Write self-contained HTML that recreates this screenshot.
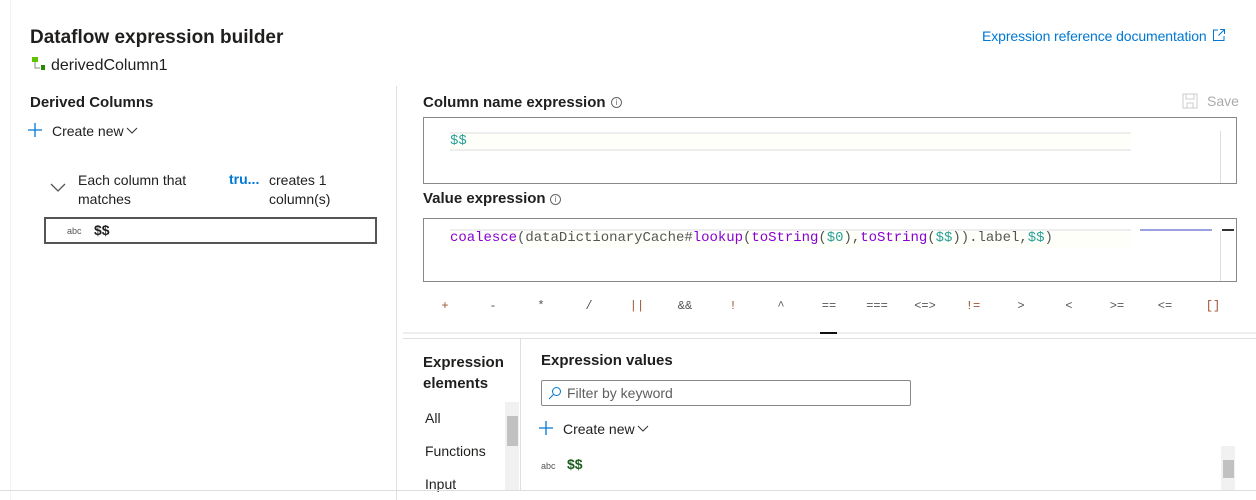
<!DOCTYPE html>
<html><head><style>
*{box-sizing:border-box;margin:0;padding:0}
body{width:1256px;height:500px;background:#fff;font-family:"Liberation Sans",sans-serif;color:#201f1e;position:relative;overflow:hidden}
.a{position:absolute;white-space:nowrap}
.mono{font-family:"Liberation Mono",monospace;font-size:14px;letter-spacing:-0.03px}
.box{position:absolute;border:1px solid #8a8886;background:#fff}
.op{position:absolute;top:299px;font-family:"Liberation Mono",monospace;font-size:12px;color:#555;width:30px;text-align:center}
</style></head><body>
<div class="a" style="left:10px;top:0;width:1px;height:500px;background:#f3f3f3"></div>
<div class="a" style="left:30px;top:27px;font-size:19px;font-weight:bold">Dataflow expression builder</div>
<svg class="a" style="left:31px;top:56px" width="16" height="16"><rect x="1" y="1" width="6" height="5" fill="#5ec400"/><path d="M4 6v6h5" stroke="#888" fill="none"/><rect x="10" y="9" width="4" height="5" fill="#2a8a00"/></svg>
<div class="a" style="left:51px;top:57px;font-size:16px">derivedColumn1</div>
<div class="a" style="left:982px;top:28px;font-size:14px;color:#0078d4;letter-spacing:-0.1px">Expression reference documentation</div>
<svg class="a" style="left:1212px;top:28px" width="14" height="14"><path d="M6 2H1.5v10.5H12V8M8 1.5h4.5V6M12.5 1.5 6.5 7.5" stroke="#0078d4" fill="none"/></svg>
<div class="a" style="left:30px;top:94px;font-size:15px;font-weight:bold">Derived Columns</div>
<svg class="a" style="left:28px;top:123px" width="14" height="14"><path d="M7 0v14M0 7h14" stroke="#0078d4" stroke-width="1.3"/></svg>
<div class="a" style="left:52px;top:123px;font-size:14px">Create new</div>
<svg class="a" style="left:126px;top:127px" width="12" height="8"><path d="M1 1l5 5 5-5" stroke="#333" fill="none"/></svg>
<svg class="a" style="left:50px;top:183px" width="16" height="10"><path d="M1 1l7 7 7-7" stroke="#555" fill="none" stroke-width="1.3"/></svg>
<div class="a" style="left:78px;top:171px;font-size:14px;line-height:19px">Each column that<br>matches</div>
<div class="a" style="left:229px;top:171px;font-size:14px;color:#0078d4;font-weight:bold">tru...</div>
<div class="a" style="left:269px;top:171px;font-size:14px;line-height:19px">creates 1<br>column(s)</div>
<div class="a" style="left:44px;top:217px;width:333px;height:27px;border:2px solid #555"></div>
<div class="a" style="left:67px;top:226px;font-size:9px;color:#555">abc</div>
<div class="a" style="left:94px;top:222px;font-size:14px;font-weight:bold">$$</div>
<div class="a" style="left:396px;top:86px;width:1px;height:414px;background:#e1dfdd"></div>
<div class="a" style="left:423px;top:94px;font-size:15px;font-weight:bold">Column name expression</div>
<div class="a" style="left:611px;top:97px;width:11px;height:11px;border:1px solid #666;border-radius:50%;font-size:8px;text-align:center;line-height:9px;color:#666">i</div>
<svg class="a" style="left:1182px;top:93px" width="16" height="16"><rect x="1" y="1" width="14" height="14" fill="none" stroke="#ccc"/><rect x="4" y="1" width="8" height="5" fill="none" stroke="#ccc"/><rect x="5" y="10" width="6" height="5" fill="none" stroke="#ccc"/></svg>
<div class="a" style="left:1207px;top:93px;font-size:14px;color:#aaa">Save</div>
<div class="box" style="left:423px;top:117px;width:814px;height:67px"></div>
<div class="a" style="left:450px;top:132px;width:681px;height:19px;border-top:2px solid #eee;border-bottom:2px solid #eee;background:#fffffa"></div>
<div class="a mono" style="left:450px;top:133px;color:#2aa198">$$</div>
<div class="a" style="left:1220px;top:131px;width:1px;height:52px;background:#ddd"></div>
<div class="a" style="left:423px;top:190px;font-size:15px;font-weight:bold">Value expression</div>
<div class="a" style="left:550px;top:194px;width:11px;height:11px;border:1px solid #666;border-radius:50%;font-size:8px;text-align:center;line-height:9px;color:#666">i</div>
<div class="box" style="left:423px;top:218px;width:814px;height:64px"></div>
<div class="a" style="left:450px;top:229px;width:681px;height:19px;border-top:2px solid #eee;background:#fffffa"></div>
<div class="a mono" style="left:450px;top:230px;color:#555"><span style="color:#8a00d4">coalesce</span>(dataDictionaryCache#<span style="color:#8a00d4">lookup</span>(<span style="color:#8a00d4">toString</span>(<span style="color:#2aa198">$0</span>),<span style="color:#8a00d4">toString</span>(<span style="color:#2aa198">$$</span>)).label,<span style="color:#2aa198">$$</span>)</div>
<div class="a" style="left:1140px;top:229px;width:72px;height:2px;background:#9aa0e0"></div>
<div class="a" style="left:1222px;top:229px;width:12px;height:2px;background:#333"></div>
<div class="a" style="left:1220px;top:231px;width:1px;height:50px;background:#ddd"></div>
<div class="op" style="left:430px;color:#a0522d">+</div><div class="op" style="left:478px">-</div><div class="op" style="left:526px">*</div><div class="op" style="left:574px">/</div><div class="op" style="left:622px;color:#a0522d">||</div><div class="op" style="left:670px">&amp;&amp;</div><div class="op" style="left:718px;color:#a0522d">!</div><div class="op" style="left:766px">^</div><div class="op" style="left:814px">==</div><div class="op" style="left:862px">===</div><div class="op" style="left:910px">&lt;=&gt;</div><div class="op" style="left:958px;color:#a0522d">!=</div><div class="op" style="left:1006px">&gt;</div><div class="op" style="left:1054px">&lt;</div><div class="op" style="left:1102px">&gt;=</div><div class="op" style="left:1150px">&lt;=</div><div class="op" style="left:1198px;color:#a0522d">[]</div>
<div class="a" style="left:403px;top:332px;width:853px;height:2px;background:#eee"></div>
<div class="a" style="left:820px;top:332px;width:17px;height:2px;background:#111"></div>
<div class="a" style="left:403px;top:338px;width:853px;height:1px;background:#e1dfdd"></div>
<div class="a" style="left:520px;top:339px;width:1px;height:151px;background:#e1dfdd"></div>
<div class="a" style="left:423px;top:352px;font-size:15px;font-weight:bold;line-height:21px">Expression<br>elements</div>
<div class="a" style="left:425px;top:410px;font-size:14px">All</div>
<div class="a" style="left:425px;top:443px;font-size:14px">Functions</div>
<div class="a" style="left:425px;top:476px;font-size:14px">Input</div>
<div class="a" style="left:505px;top:402px;width:14px;height:88px;background:#f1f1f1"></div>
<div class="a" style="left:507px;top:416px;width:11px;height:30px;background:#c1c1c1"></div>
<div class="a" style="left:541px;top:352px;font-size:15px;font-weight:bold">Expression values</div>
<div class="a" style="left:541px;top:380px;width:370px;height:26px;border:1px solid #8a8886;border-radius:2px"></div>
<svg class="a" style="left:548px;top:386px" width="14" height="14"><circle cx="8.5" cy="5.5" r="4" stroke="#0078d4" fill="none"/><path d="M5.5 8.5 1 13" stroke="#0078d4"/></svg>
<div class="a" style="left:567px;top:385px;font-size:14px;color:#605e5c">Filter by keyword</div>
<svg class="a" style="left:539px;top:421px" width="14" height="14"><path d="M7 0v14M0 7h14" stroke="#0078d4" stroke-width="1.3"/></svg>
<div class="a" style="left:563px;top:421px;font-size:14px">Create new</div>
<svg class="a" style="left:637px;top:425px" width="12" height="8"><path d="M1 1l5 5 5-5" stroke="#333" fill="none"/></svg>
<div class="a" style="left:541px;top:461px;font-size:9px;color:#555">abc</div>
<div class="a" style="left:567px;top:456px;font-size:14px;font-weight:bold;color:#1b5e20">$$</div>
<div class="a" style="left:1221px;top:446px;width:14px;height:44px;background:#f1f1f1"></div>
<div class="a" style="left:1223px;top:460px;width:11px;height:18px;background:#c1c1c1"></div>
<div class="a" style="left:0;top:490px;width:1256px;height:1px;background:#ddd"></div>
</body></html>
